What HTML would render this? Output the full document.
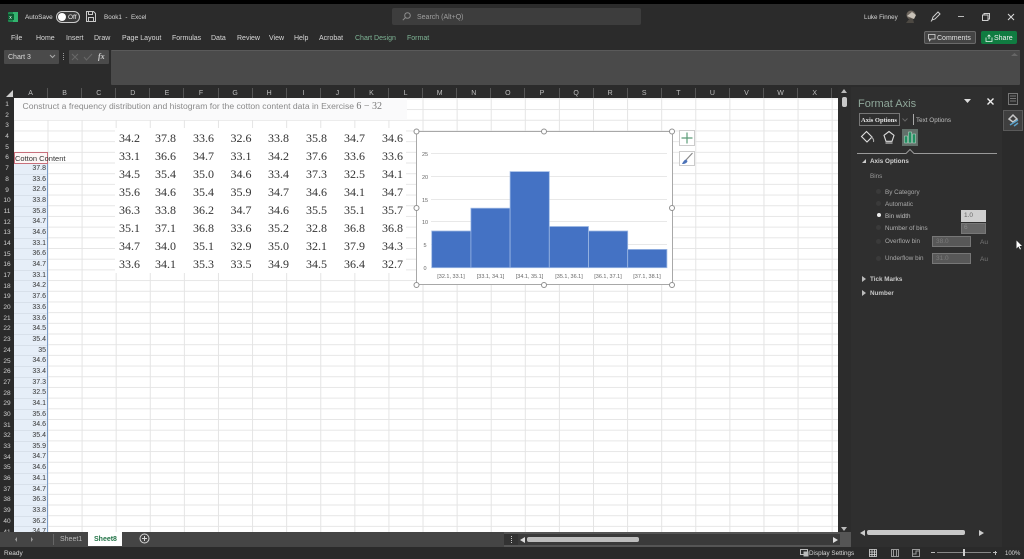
<!DOCTYPE html>
<html><head><meta charset="utf-8"><style>
*{box-sizing:border-box}
html,body{margin:0;padding:0;width:1024px;height:558px;overflow:hidden;background:#2b2b2b;font-family:"Liberation Sans",sans-serif}
.a{position:absolute;white-space:nowrap}
.t{position:absolute;white-space:nowrap;color:#d8d8d8;font-size:7px;line-height:10px}
#ch{position:absolute;left:14px;top:88px;display:flex;height:11px;width:824px;overflow:hidden}
#ch div{flex:0 0 34.1px;text-align:center;color:#bdbdbd;font-size:7px;line-height:11.500px;border-right:1px solid #555}
#rh{position:absolute;left:0;top:100px;width:14px;height:432px;overflow:hidden;background:#2b2b2b}
#rh div{height:10.7px;line-height:10.7px;text-align:center;color:#d0d0d0;font-size:6.5px}
#grid{position:absolute;left:14px;top:98px;width:824px;height:434px;background-color:#fff;background-image:linear-gradient(to right,#e4e4e4 1px,transparent 1px),linear-gradient(to bottom,#e6e6e6 1px,transparent 1px);background-size:34.1px 10.7px;background-position:33.5px 0,0 0.4px}
#colA{position:absolute;left:14px;top:163.900px;width:34px;height:368.100px;overflow:hidden;background:#e6eef8;border-right:1.5px solid #7a9cc8}
#colA div{height:10.7px;line-height:10.7px;text-align:right;padding-right:1px;color:#333;font-size:7px;border-bottom:1px solid #d8e0ea}
.d{position:absolute;font-family:"Liberation Serif",serif;font-size:12px;color:#333;line-height:14px;white-space:nowrap}
.rd{position:absolute;left:876px;width:5px;height:5px;border-radius:50%;background:#3a3a3a}
.l{position:absolute;left:885px;color:#a8a8a8;font-size:6.300px;line-height:9px;white-space:nowrap}
</style></head><body>
<div class="a" style="left:0;top:0;width:1024px;height:4px;background:#000"></div>

<!-- title bar -->
<svg class="a" style="left:8px;top:12px" width="10" height="10"><rect width="10" height="10" rx="1" fill="#1d8a50"/><rect x="5" y="0" width="5" height="10" fill="#33b46f"/><rect x="0" y="2" width="6" height="6" fill="#0d5c32"/><text x="1.2" y="7" font-size="5" fill="#fff" font-family="Liberation Sans">x</text></svg>
<div class="t" style="left:25px;top:13px;color:#ddd;font-size:6.400px">AutoSave</div>
<div class="a" style="left:56px;top:11px;width:24px;height:12px;border:1px solid #ccc;border-radius:6px;background:#3a3a3a"></div>
<div class="a" style="left:58px;top:13px;width:8px;height:8px;border-radius:50%;background:#fff"></div>
<div class="t" style="left:68px;top:12.500px;font-size:6.500px;color:#eee">Off</div>
<svg class="a" style="left:86px;top:11px" width="10" height="11" fill="none" stroke="#c8c8c8" stroke-width="1"><path d="M.5.5h7l2 2v8h-9z"/><path d="M2.5.5v3h4v-3M2.5 10.500v-4h5v4"/></svg>
<div class="t" style="left:104px;top:13px;font-size:6.300px">Book1 &nbsp;-&nbsp; Excel</div>
<div class="a" style="left:392px;top:8px;width:249px;height:17px;background:#3d3d3d;border-radius:2px"></div>
<svg class="a" style="left:402px;top:12px" width="9" height="9" fill="none" stroke="#8c8c8c"><circle cx="5.500" cy="3.500" r="2.800"/><path d="M3.500 5.500L.8 8.200"/></svg>
<div class="t" style="left:417px;top:13px;color:#a0a0a0;font-size:7px">Search (Alt+Q)</div>
<div class="t" style="left:864px;top:13px;font-size:6.200px">Luke Finney</div>
<svg class="a" style="left:903px;top:10px" width="15" height="14"><circle cx="8" cy="5" r="4.500" fill="#6e675f"/><path d="M4 6l5-4 4 3-2 4z" fill="#c8c2b8"/><path d="M3 13l4-5 3 1 1 4z" fill="#4c4842"/></svg>
<svg class="a" style="left:930px;top:11px" width="11" height="11" fill="none" stroke="#d0d0d0"><path d="M2 9l1-3 5-5 2 2-5 5zM2 9l-1 1.500"/></svg>
<div class="a" style="left:958px;top:16px;width:6px;height:1px;background:#bbb"></div>
<svg class="a" style="left:982px;top:13px" width="8" height="8" fill="none" stroke="#cfcfcf"><rect x=".5" y="2" width="5.500" height="5.500"/><path d="M2 2V.5h5.500V6H6"/></svg>
<svg class="a" style="left:1007px;top:13px" width="8" height="8" stroke="#dcdcdc"><path d="M1 1l6 6M7 1L1 7"/></svg>

<!-- tabs -->
<div class="t" style="left:11px;top:34px">File</div>
<div class="t" style="left:36px;top:34px">Home</div>
<div class="t" style="left:66px;top:34px">Insert</div>
<div class="t" style="left:94px;top:34px">Draw</div>
<div class="t" style="left:122px;top:34px">Page Layout</div>
<div class="t" style="left:172px;top:34px">Formulas</div>
<div class="t" style="left:211px;top:34px">Data</div>
<div class="t" style="left:237px;top:34px">Review</div>
<div class="t" style="left:269px;top:34px">View</div>
<div class="t" style="left:294px;top:34px">Help</div>
<div class="t" style="left:319px;top:34px">Acrobat</div>
<div class="t" style="left:355px;top:34px;color:#7fb596">Chart Design</div>
<div class="t" style="left:407px;top:34px;color:#7fb596">Format</div>
<div class="a" style="left:924px;top:31px;width:52px;height:13px;background:#444;border:1px solid #6a6a6a;border-radius:2px"></div>
<svg class="a" style="left:928px;top:34px" width="8" height="8" fill="none" stroke="#ddd" stroke-width=".8"><path d="M.5.5h6.500v4.500H3L1.500 6.800V5h-1z"/></svg>
<div class="t" style="left:937px;top:33.500px;color:#e2e2e2;font-size:7px">Comments</div>
<div class="a" style="left:981px;top:31px;width:36px;height:13px;background:#107c41;border-radius:2px"></div>
<svg class="a" style="left:985px;top:34px" width="8" height="8" fill="none" stroke="#e8f5ee" stroke-width=".8"><path d="M1 3.500v4h6v-4M4 5V1M2.500 2.500L4 1l1.500 1.500"/></svg>
<div class="t" style="left:994px;top:33.500px;color:#f2f2f2;font-size:7px">Share</div>

<!-- formula bar -->
<div class="a" style="left:4px;top:50px;width:55px;height:13.500px;background:#4a4a4a;border-radius:1px"></div>
<div class="t" style="left:8px;top:52.500px">Chart 3</div>
<svg class="a" style="left:49px;top:54px" width="7" height="5" fill="none" stroke="#aaa"><path d="M1 1l2.500 2.500L6 1"/></svg>
<div class="a" style="left:62.500px;top:53px;width:1px;height:7px;border-left:1px dotted #999"></div>
<div class="a" style="left:69px;top:50px;width:40px;height:13.500px;background:#4a4a4a;border-radius:1px"></div>
<svg class="a" style="left:71px;top:53px" width="24" height="8" fill="none" stroke="#686868"><path d="M1 1l6 6M7 1L1 7M13 4l2.500 3L21 1"/></svg>
<div class="a" style="left:98px;top:51.500px;font:italic bold 8px 'Liberation Serif',serif;color:#ccc;line-height:10px">fx</div>
<div class="a" style="left:111px;top:50px;width:909px;height:35px;background:#4a4a4a;border-radius:1px;border-top:1px solid #5a5a5a"></div>
<svg class="a" style="left:1011px;top:52px" width="7" height="4"><path d="M0 4l3.500-3L7 4z" fill="#666"/></svg>

<!-- headers -->
<div id="ch"><div>A</div><div>B</div><div>C</div><div>D</div><div>E</div><div>F</div><div>G</div><div>H</div><div>I</div><div>J</div><div>K</div><div>L</div><div>M</div><div>N</div><div>O</div><div>P</div><div>Q</div><div>R</div><div>S</div><div>T</div><div>U</div><div>V</div><div>W</div><div>X</div></div>
<svg class="a" style="left:5px;top:89px" width="9" height="9"><path d="M8 1v7H1z" fill="#cfcfcf"/></svg>
<div id="rh"><div>1</div><div>2</div><div>3</div><div>4</div><div>5</div><div>6</div><div>7</div><div>8</div><div>9</div><div>10</div><div>11</div><div>12</div><div>13</div><div>14</div><div>15</div><div>16</div><div>17</div><div>18</div><div>19</div><div>20</div><div>21</div><div>22</div><div>23</div><div>24</div><div>25</div><div>26</div><div>27</div><div>28</div><div>29</div><div>30</div><div>31</div><div>32</div><div>33</div><div>34</div><div>35</div><div>36</div><div>37</div><div>38</div><div>39</div><div>40</div><div>41</div></div>

<!-- grid -->
<div id="grid"></div>
<div class="a" style="left:14px;top:98px;width:393px;height:22px;background:#fafafb"></div>
<div class="a" style="left:22.500px;top:100px;color:#8a8a8a;font-size:8.600px;line-height:12px">Construct a frequency distribution and histogram for the cotton content data in Exercise <span style="font-family:'Liberation Serif',serif;font-size:10px;color:#777">6 &minus; 32</span></div>

<div id="colA"><div>37.8</div><div>33.6</div><div>32.6</div><div>33.8</div><div>35.8</div><div>34.7</div><div>34.6</div><div>33.1</div><div>36.6</div><div>34.7</div><div>33.1</div><div>34.2</div><div>37.6</div><div>33.6</div><div>33.6</div><div>34.5</div><div>35.4</div><div>35</div><div>34.6</div><div>33.4</div><div>37.3</div><div>32.5</div><div>34.1</div><div>35.6</div><div>34.6</div><div>35.4</div><div>35.9</div><div>34.7</div><div>34.6</div><div>34.1</div><div>34.7</div><div>36.3</div><div>33.8</div><div>36.2</div><div>34.7</div></div>
<div class="a" style="left:14px;top:152px;width:34px;height:11.500px;border:1px solid #c8707c;background:#fdf6f6"></div>
<div class="a" style="left:15px;top:152.500px;font-size:7.500px;color:#333;line-height:11px">Cotton Content</div>

<!-- data image -->
<div class="a" style="left:115px;top:128px;width:291px;height:145px;background:#fff"></div>
<div class="d" style="left:119px;top:131px">34.2</div><div class="d" style="left:155px;top:131px">37.8</div><div class="d" style="left:193px;top:131px">33.6</div><div class="d" style="left:230.500px;top:131px">32.6</div><div class="d" style="left:268px;top:131px">33.8</div><div class="d" style="left:306px;top:131px">35.8</div><div class="d" style="left:344px;top:131px">34.7</div><div class="d" style="left:382px;top:131px">34.6</div>
<div class="d" style="left:119px;top:149px">33.1</div><div class="d" style="left:155px;top:149px">36.6</div><div class="d" style="left:193px;top:149px">34.7</div><div class="d" style="left:230.500px;top:149px">33.1</div><div class="d" style="left:268px;top:149px">34.2</div><div class="d" style="left:306px;top:149px">37.6</div><div class="d" style="left:344px;top:149px">33.6</div><div class="d" style="left:382px;top:149px">33.6</div>
<div class="d" style="left:119px;top:167px">34.5</div><div class="d" style="left:155px;top:167px">35.4</div><div class="d" style="left:193px;top:167px">35.0</div><div class="d" style="left:230.500px;top:167px">34.6</div><div class="d" style="left:268px;top:167px">33.4</div><div class="d" style="left:306px;top:167px">37.3</div><div class="d" style="left:344px;top:167px">32.5</div><div class="d" style="left:382px;top:167px">34.1</div>
<div class="d" style="left:119px;top:185px">35.6</div><div class="d" style="left:155px;top:185px">34.6</div><div class="d" style="left:193px;top:185px">35.4</div><div class="d" style="left:230.500px;top:185px">35.9</div><div class="d" style="left:268px;top:185px">34.7</div><div class="d" style="left:306px;top:185px">34.6</div><div class="d" style="left:344px;top:185px">34.1</div><div class="d" style="left:382px;top:185px">34.7</div>
<div class="d" style="left:119px;top:203px">36.3</div><div class="d" style="left:155px;top:203px">33.8</div><div class="d" style="left:193px;top:203px">36.2</div><div class="d" style="left:230.500px;top:203px">34.7</div><div class="d" style="left:268px;top:203px">34.6</div><div class="d" style="left:306px;top:203px">35.5</div><div class="d" style="left:344px;top:203px">35.1</div><div class="d" style="left:382px;top:203px">35.7</div>
<div class="d" style="left:119px;top:221px">35.1</div><div class="d" style="left:155px;top:221px">37.1</div><div class="d" style="left:193px;top:221px">36.8</div><div class="d" style="left:230.500px;top:221px">33.6</div><div class="d" style="left:268px;top:221px">35.2</div><div class="d" style="left:306px;top:221px">32.8</div><div class="d" style="left:344px;top:221px">36.8</div><div class="d" style="left:382px;top:221px">36.8</div>
<div class="d" style="left:119px;top:239px">34.7</div><div class="d" style="left:155px;top:239px">34.0</div><div class="d" style="left:193px;top:239px">35.1</div><div class="d" style="left:230.500px;top:239px">32.9</div><div class="d" style="left:268px;top:239px">35.0</div><div class="d" style="left:306px;top:239px">32.1</div><div class="d" style="left:344px;top:239px">37.9</div><div class="d" style="left:382px;top:239px">34.3</div>
<div class="d" style="left:119px;top:257px">33.6</div><div class="d" style="left:155px;top:257px">34.1</div><div class="d" style="left:193px;top:257px">35.3</div><div class="d" style="left:230.500px;top:257px">33.5</div><div class="d" style="left:268px;top:257px">34.9</div><div class="d" style="left:306px;top:257px">34.5</div><div class="d" style="left:344px;top:257px">36.4</div><div class="d" style="left:382px;top:257px">32.7</div>

<!-- chart -->
<svg class="a" style="left:410px;top:125px" width="270" height="166" font-family="Liberation Sans" font-size="5.500" fill="#666">
<rect x="6.500" y="6.500" width="256" height="153" fill="#fff" stroke="#a8a8a8"/>
<g stroke="#e8e8e8"><path d="M21 28.500h236M21 51.500h236M21 74.500h236M21 96.500h236M21 119.500h236"/></g>
<g fill="#4472c4" stroke="#9db8e4" stroke-width=".8"><rect x="21.700" y="106" width="39.200" height="36.700"/><rect x="60.900" y="83.200" width="39.200" height="59.500"/><rect x="100.100" y="46.600" width="39.200" height="96.100"/><rect x="139.300" y="101.500" width="39.200" height="41.200"/><rect x="178.500" y="106" width="39.200" height="36.700"/><rect x="217.700" y="124.400" width="39.200" height="18.300"/></g>
<g text-anchor="middle"><text x="15" y="145">0</text><text x="15" y="122">5</text><text x="15" y="99">10</text><text x="15" y="77">15</text><text x="15" y="54">20</text><text x="15" y="31">25</text>
<text x="41" y="153">[32.1, 33.1]</text><text x="80.500" y="153">[33.1, 34.1]</text><text x="119.500" y="153">[34.1, 35.1]</text><text x="159" y="153">[35.1, 36.1]</text><text x="198" y="153">[36.1, 37.1]</text><text x="237" y="153">[37.1, 38.1]</text></g>
<g fill="#fff" stroke="#8f8f8f" stroke-width="1"><circle cx="6.500" cy="6.500" r="2.500"/><circle cx="134" cy="6.500" r="2.500"/><circle cx="262" cy="6.500" r="2.500"/><circle cx="6.500" cy="83" r="2.500"/><circle cx="262" cy="83" r="2.500"/><circle cx="6.500" cy="160" r="2.500"/><circle cx="134" cy="160" r="2.500"/><circle cx="262" cy="160" r="2.500"/></g>
</svg>
<div class="a" style="left:679px;top:130px;width:16px;height:16px;background:#fff;border:1px solid #ccc"></div>
<svg class="a" style="left:679px;top:130px" width="16" height="16" stroke="#5c9c78" stroke-width="1.200"><path d="M8 2.500v11M2.500 8h11"/></svg>
<div class="a" style="left:679px;top:151px;width:16px;height:15px;background:#fff;border:1px solid #ccc"></div>
<svg class="a" style="left:679px;top:151px" width="16" height="15" fill="none"><path d="M13.500 2L7 9" stroke="#888" stroke-width="1.200"/><path d="M3 13c3 0 5-1 5.500-3L7 8.500C5 9 4 11 3 13z" fill="#4c72b8"/></svg>

<!-- vertical scrollbar -->
<div class="a" style="left:838px;top:87px;width:13px;height:445px;background:#2c2c2c"></div>
<svg class="a" style="left:841px;top:89px" width="6" height="4"><path d="M0 4l3-4 3 4z" fill="#bbb"/></svg>
<div class="a" style="left:842px;top:97px;width:5px;height:10px;background:#c8c8c8;border-radius:2px"></div>
<svg class="a" style="left:841px;top:527px" width="6" height="4"><path d="M0 0l3 4 3-4z" fill="#bbb"/></svg>

<!-- panel -->
<div class="a" style="left:851px;top:87px;width:151px;height:460px;background:#2f2f2f"></div>
<div class="a" style="left:1002px;top:87px;width:22px;height:460px;background:#2b2b2b"></div>
<div class="a" style="left:858px;top:97px;color:#8fa79a;font-size:11px;line-height:15px">Format Axis</div>
<svg class="a" style="left:964px;top:99px" width="7" height="4"><path d="M0 0h7L3.500 4z" fill="#ddd"/></svg>
<svg class="a" style="left:987px;top:97.500px" width="7" height="7" stroke="#eee" stroke-width="1.400"><path d="M.5.5l6 6M6.500.5l-6 6"/></svg>
<div class="a" style="left:859px;top:113px;width:41px;height:13px;border:1px solid #777"></div>
<div class="a" style="left:861px;top:115.500px;font:bold 6.500px/9px 'Liberation Serif',serif;color:#e4e4e4">Axis Options</div>
<svg class="a" style="left:902px;top:118px" width="6" height="4" fill="none" stroke="#666"><path d="M.5.5L3 3 5.500.5"/></svg>
<div class="a" style="left:913px;top:114px;width:1px;height:11px;background:#aaa"></div>
<div class="a" style="left:916px;top:115.500px;font:6.300px/9px 'Liberation Sans',sans-serif;color:#bdbdbd">Text Options</div>
<svg class="a" style="left:860px;top:130px" width="15" height="14" fill="none" stroke="#e0e0e0" stroke-width="1.100"><path d="M6.500 1.500L12 7l-5 5-5.500-5.500z"/><path d="M11 7c2 1 3 2.500 2.500 5" stroke="#aaa"/></svg>
<svg class="a" style="left:882px;top:130px" width="14" height="14" fill="none" stroke="#dcdcdc" stroke-width="1.100"><path d="M7 1.500l5 3.800-2 6H4l-2-6zM3.500 13h7"/></svg>
<div class="a" style="left:902px;top:129px;width:16px;height:17px;background:#62706a"></div>
<svg class="a" style="left:903px;top:131px" width="14" height="13" fill="#1f8f60" stroke="#bfe0d0" stroke-width=".5"><rect x="1.500" y="5" width="3" height="7"/><rect x="5.500" y="1" width="3" height="11"/><rect x="9.500" y="3" width="3" height="9"/></svg>
<svg class="a" style="left:857px;top:147px" width="140" height="8" fill="none" stroke="#999"><path d="M0 6.500h49l4-4 4 4h83"/></svg>
<svg class="a" style="left:861px;top:158px" width="6" height="6"><path d="M5 1v4H1z" fill="#ccc"/></svg>
<div class="a" style="left:870px;top:157px;font:bold 6.300px/9px 'Liberation Sans',sans-serif;color:#d2d2d2">Axis Options</div>
<div class="a" style="left:870px;top:172px;font:6.300px/9px 'Liberation Sans',sans-serif;color:#9a9a9a">Bins</div>
<div class="rd" style="top:189px"></div><div class="l" style="top:187.500px">By Category</div>
<div class="rd" style="top:201px"></div><div class="l" style="top:199.500px">Automatic</div>
<div class="rd" style="top:213px;background:#eee;left:877px;width:4px;height:4px"></div><div class="l" style="top:211.500px;color:#bdbdbd">Bin width</div>
<div class="rd" style="top:225px"></div><div class="l" style="top:223.500px;color:#b0b0b0">Number of bins</div>
<div class="a" style="left:961px;top:210px;width:25px;height:11.500px;background:#cfcfcf"></div>
<div class="a" style="left:964px;top:211px;font-size:6.500px;line-height:10px;color:#666">1.0</div>
<div class="a" style="left:961px;top:222.500px;width:25px;height:11px;background:#666;border:1px solid #777"></div>
<div class="a" style="left:964px;top:223px;font-size:6.500px;line-height:10px;color:#8a8a8a">6</div>
<div class="rd" style="top:239px"></div><div class="l" style="top:237px">Overflow bin</div>
<div class="a" style="left:932px;top:236px;width:39px;height:11px;background:#585858;border:1px solid #777"></div>
<div class="a" style="left:936px;top:236.500px;font-size:6.500px;line-height:10px;color:#7c7c7c">38.0</div>
<div class="a" style="left:980px;top:238px;font-size:6.500px;line-height:10px;color:#777">Au</div>
<div class="rd" style="top:256px"></div><div class="l" style="top:254px">Underflow bin</div>
<div class="a" style="left:932px;top:253px;width:39px;height:11px;background:#585858;border:1px solid #777"></div>
<div class="a" style="left:936px;top:253.500px;font-size:6.500px;line-height:10px;color:#7c7c7c">31.0</div>
<div class="a" style="left:980px;top:255px;font-size:6.500px;line-height:10px;color:#777">Au</div>
<svg class="a" style="left:862px;top:276px" width="4" height="6"><path d="M0 0l4 3-4 3z" fill="#bbb"/></svg>
<div class="a" style="left:870px;top:275px;font:bold 6.300px/9px 'Liberation Sans',sans-serif;color:#c8c8c8">Tick Marks</div>
<svg class="a" style="left:862px;top:290px" width="4" height="6"><path d="M0 0l4 3-4 3z" fill="#bbb"/></svg>
<div class="a" style="left:870px;top:289px;font:bold 6.300px/9px 'Liberation Sans',sans-serif;color:#c8c8c8">Number</div>
<svg class="a" style="left:860px;top:530px" width="5" height="6"><path d="M5 0L0 3l5 3z" fill="#ccc"/></svg>
<div class="a" style="left:867px;top:530px;width:98px;height:5px;background:#c8c8c8;border-radius:2px"></div>
<svg class="a" style="left:979px;top:530px" width="5" height="6"><path d="M0 0l5 3-5 3z" fill="#ccc"/></svg>
<!-- side strip -->
<svg class="a" style="left:1008px;top:93px" width="10" height="12" fill="none" stroke="#777"><rect x=".5" y=".5" width="9" height="11"/><path d="M2 3h6M2 5.500h6M2 8h6"/></svg>
<div class="a" style="left:1003px;top:110px;width:20px;height:21px;background:#3f3f3f;border:1px solid #5a5a5a"></div>
<svg class="a" style="left:1007px;top:113px" width="13" height="14" fill="none" stroke-width="1.500"><path d="M2 6l4-4 4 4-4 3z" stroke="#c8c8c8"/><path d="M3 12l8-5M7 13l4-3" stroke="#5aa0c8"/></svg>
<svg class="a" style="left:1016px;top:240px" width="6" height="10"><path d="M.5.5v8l2-2 1.500 3 1-.5-1.500-3h2.500z" fill="#fff"/></svg>

<!-- tabs row -->
<div class="a" style="left:0;top:532px;width:851px;height:15px;background:#454545"></div>
<svg class="a" style="left:15px;top:537px" width="18" height="5" fill="#999"><path d="M2 0L0 2.500 2 5zM16 0l2 2.500-2 2.500z"/></svg>
<div class="a" style="left:53px;top:534px;width:1px;height:11px;background:#666"></div>
<div class="t" style="left:60px;top:535px;color:#bbb;font-size:7px">Sheet1</div>
<div class="a" style="left:88px;top:532px;width:34px;height:14px;background:#fff"></div>
<div class="t" style="left:94px;top:535px;color:#217346;font-weight:bold;font-size:7px">Sheet8</div>
<svg class="a" style="left:139px;top:533px" width="11" height="11" fill="none" stroke="#d8d8d8"><circle cx="5.500" cy="5.500" r="4.500"/><path d="M5.500 3v5M3 5.500h5"/></svg>
<div class="a" style="left:504px;top:532px;width:347px;height:15px;background:#555"></div>
<div class="a" style="left:504px;top:534px;width:14px;height:11px;background:#333"></div>
<div class="a" style="left:510.500px;top:536px;width:1px;height:7px;border-left:1.500px dotted #ccc"></div>
<div class="a" style="left:518px;top:534px;width:322px;height:11px;background:#3a3a3a"></div>
<svg class="a" style="left:520px;top:537px" width="5" height="6"><path d="M5 0L0 3l5 3z" fill="#ddd"/></svg>
<div class="a" style="left:527px;top:537px;width:112px;height:5px;background:#bdbdbd;border-radius:2px"></div>
<svg class="a" style="left:833px;top:537px" width="5" height="6"><path d="M0 0l5 3-5 3z" fill="#ddd"/></svg>

<!-- status bar -->
<div class="a" style="left:0;top:547px;width:1024px;height:11px;background:#2a2a2a"></div>
<div class="t" style="left:4px;top:548.500px;font-size:6.500px">Ready</div>
<svg class="a" style="left:800px;top:549px" width="9" height="8" fill="none" stroke="#bbb"><rect x=".5" y=".5" width="7" height="5"/><rect x="4" y="3" width="4" height="4" fill="#bbb"/></svg>
<div class="t" style="left:809px;top:548.500px;font-size:6.300px">Display Settings</div>
<svg class="a" style="left:869px;top:548.500px" width="8" height="8" fill="none" stroke="#ddd" stroke-width=".8"><path d="M.5.5h7v7h-7zM3 .5v7M5.500.5v7M.5 3h7M.5 5.500h7"/></svg>
<svg class="a" style="left:891px;top:548.500px" width="8" height="8" fill="none" stroke="#999"><rect x=".5" y=".5" width="7" height="7"/><path d="M2.500.5v7M5.500.5v7"/></svg>
<svg class="a" style="left:912px;top:548.500px" width="8" height="8" fill="none" stroke="#999"><rect x=".5" y=".5" width="7" height="7"/><path d="M.5 5H4V2h3.500"/></svg>
<div class="a" style="left:931px;top:552px;width:4px;height:1px;background:#bbb"></div>
<div class="a" style="left:937px;top:552px;width:54px;height:1px;background:#888"></div>
<div class="a" style="left:963px;top:549px;width:2px;height:7px;background:#ccc"></div>
<div class="a" style="left:993px;top:552px;width:4px;height:1px;background:#bbb"></div>
<div class="a" style="left:994.500px;top:550.500px;width:1px;height:4px;background:#bbb"></div>
<div class="t" style="left:1005px;top:548.500px;font-size:6px">100%</div>
</body></html>
